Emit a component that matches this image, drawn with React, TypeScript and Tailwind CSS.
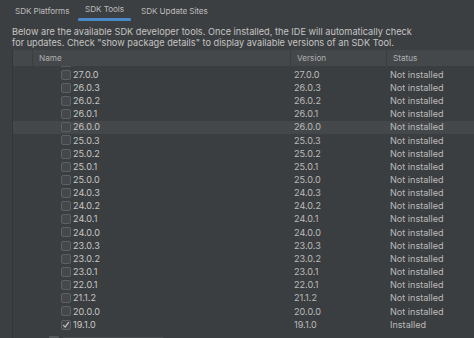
import React from "react";

const rows = [
  "27.0.0","26.0.3","26.0.2","26.0.1","26.0.0","25.0.3","25.0.2","25.0.1","25.0.0",
  "24.0.3","24.0.2","24.0.1","24.0.0","23.0.3","23.0.2","23.0.1","22.0.1","21.1.2","20.0.0","19.1.0",
];

function Check({ checked }: { checked: boolean }) {
  return (
    <div className="w-[10px] h-[10px] rounded-[2px] border border-[#5e6163] bg-[#45484a] flex items-center justify-center">
      {checked && (
        <svg width="8" height="8" viewBox="0 0 8 8">
          <path d="M1.2 4.2 L3.2 6.2 L6.8 1.2" stroke="#c8c8c8" strokeWidth="1.2" fill="none" />
        </svg>
      )}
    </div>
  );
}

export default function App() {
  return (
    <div
      className="w-[474px] h-[338px] overflow-hidden bg-[#3c3f41] text-[#bbbbbb] relative"
      style={{ fontFamily: "Inter, 'Open Sans', sans-serif" }}
    >
      {/* Tabs */}
      <div className="h-[22px] flex items-stretch pl-[15px] text-[8.2px] tracking-[-0.1px] whitespace-nowrap">
        <div className="w-[63px] shrink-0 flex items-center">SDK Platforms</div>
        <div className="w-[53px] shrink-0 flex flex-col items-center">
          <div className="flex-1 flex items-center">SDK Tools</div>
          <div className="h-[3px] w-[53px] bg-[#4a88c7] rounded-[1px] mb-[1px]" />
        </div>
        <div className="ml-[10px] shrink-0 flex items-center">SDK Update Sites</div>
      </div>
      {/* Description */}
      <div className="pl-[12px] pt-[4px] text-[9.2px] leading-[11px] text-[#c4c4c4] whitespace-nowrap">
        Below are the available SDK developer tools. Once installed, the IDE will automatically check
        <br />
        for updates. Check "show package details" to display available versions of an SDK Tool.
      </div>
      {/* Table */}
      <div className="absolute left-[12px] top-[50px] right-0 bottom-0 bg-[#3b3e40] border-l border-[#333537]">
        <div className="h-[16px] flex bg-[#45484a] text-[8.2px] text-[#aeb0b1]">
          <div className="w-[20px] border-r border-[#3c3f41]" />
          <div className="w-[258px] flex items-center pl-[6px] border-r border-[#3a3d3f]">Name</div>
          <div className="w-[96px] flex items-center pl-[6px] border-r border-[#3a3d3f]">Version</div>
          <div className="flex-1 flex items-center pl-[6px]">Status</div>
        </div>
        <div className="pt-[2px] relative">
          <div className="absolute left-[48px] top-0 w-[10px] h-[1px] bg-[#55585a]" />
          {rows.map((r, i) => (
            <div
              key={r}
              className={`h-[13.16px] flex items-center text-[9.1px] ${i === 4 ? "bg-[#45484a]" : ""}`}
            >
              <div className="w-[48px]" />
              <Check checked={r === "19.1.0"} />
              <div className="w-[220px] pl-[2px] text-[#c6c6c6]">{r}</div>
              <div className="w-[96px] pl-[3px]">{r}</div>
              <div className="flex-1 pl-[3px]">{r === "19.1.0" ? "Installed" : "Not installed"}</div>
            </div>
          ))}
          <div className="h-[8px] flex items-end">
            <div className="w-[36px]" />
            <div className="w-[10px] h-[3px] bg-[#55585a] rounded-t-[1px]" />
            <div className="ml-[4px] w-[100px] h-[2px] bg-[#4a4d4f]" />
          </div>
        </div>
      </div>
    </div>
  );
}
